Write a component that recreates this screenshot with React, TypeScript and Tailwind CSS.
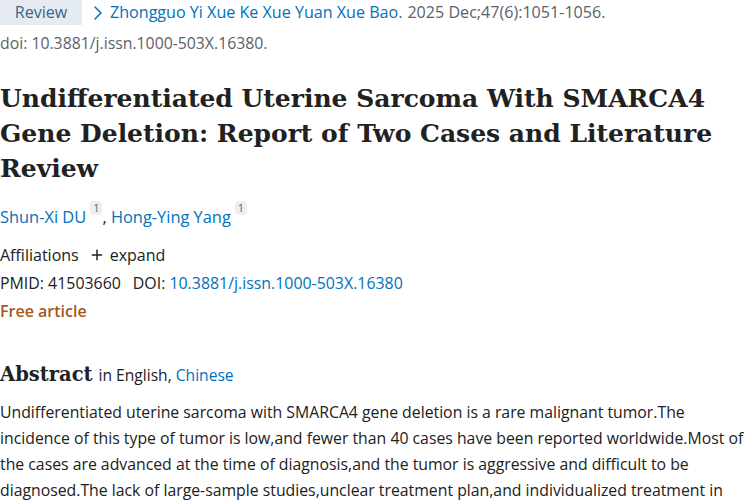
import { ChevronRight, Plus } from 'lucide-react';

const sans = 'font-["Open_Sans",sans-serif]';
const serif = 'font-["DejaVu_Serif",serif]';

function Sup({ n }: { n: number }) {
  return (
    <sup className="ml-[4px] inline-block rounded-sm bg-[#eeeeee] px-[3px] text-[11px] leading-[14px] text-[#5b616b] align-[6px]">
      {n}
    </sup>
  );
}

export default function App() {
  return (
    <div className={`${sans} h-[500px] w-[750px] overflow-hidden bg-white text-[#212121]`}>
      {/* citation line */}
      <div className="flex h-[25px] items-center text-[16.1px]">
        <span className="flex h-full w-[82px] items-center justify-center bg-[#e6ebf2] text-[#35648c]">
          Review
        </span>
        <ChevronRight className="ml-[4px] text-[#0071bc]" size={24} strokeWidth={1.5} />
        <a className="text-[#0071bc]">Zhongguo Yi Xue Ke Xue Yuan Xue Bao.</a>
        <span className="ml-[5px] text-[#5b616b]">2025 Dec;47(6):1051-1056.</span>
      </div>
      <div className="mt-[6px] text-[15.8px] leading-[24px] text-[#5b616b]">
        doi: 10.3881/j.issn.1000-503X.16380.
      </div>

      {/* title */}
      <h1 className={`${serif} mt-[26px] text-[25px] font-bold leading-[35px] text-[#212121]`}>
        Undifferentiated Uterine Sarcoma With SMARCA4 Gene Deletion: Report of Two Cases and Literature Review
      </h1>

      {/* authors */}
      <div className="mt-[19px] text-[16.4px] leading-[24px]">
        <a className="text-[#0071bc]">Shun-Xi DU</a>
        <Sup n={1} />
        <span className="text-[#212121]">, </span>
        <a className="text-[#0071bc]">Hong-Ying Yang</a>
        <Sup n={1} />
      </div>

      <div className="mt-[14px] flex items-center text-[16px] leading-[24px]">
        <span>Affiliations</span>
        <Plus className="ml-[10px] text-[#212121]" size={16} strokeWidth={2.2} />
        <span className="ml-[5px]">expand</span>
      </div>
      <div className="mt-[4px] text-[15.9px] leading-[24px]">
        <span>PMID: 41503660</span>
        <span className="ml-[12px]">DOI: </span>
        <a className="text-[#0071bc]">10.3881/j.issn.1000-503X.16380</a>
      </div>
      <div className="mt-[4px] text-[16px] font-semibold leading-[24px] text-[#a5581b]">Free article</div>

      {/* abstract */}
      <div className="mt-[37px] flex h-[30px] items-baseline">
        <h2 className={`${serif} text-[19.5px] font-bold leading-[30px]`}>Abstract</h2>
        <span className="ml-[6px] text-[15.6px]">
          in English, <a className="text-[#0071bc]">Chinese</a>
        </span>
      </div>
      <p className="mt-[9px] w-[748px] text-[15.8px] leading-[26px] text-[#212121]">
        Undifferentiated uterine sarcoma with SMARCA4 gene deletion is a rare malignant tumor.The incidence of this type
        of tumor is low,and fewer than 40 cases have been reported worldwide.Most of the cases are advanced at the time of
        diagnosis,and the tumor is aggressive and difficult to be diagnosed.The lack of large-sample studies,unclear
        treatment plan,and individualized treatment in clinical practice make it difficult to guide the treatment of
        this disease.
      </p>
    </div>
  );
}
